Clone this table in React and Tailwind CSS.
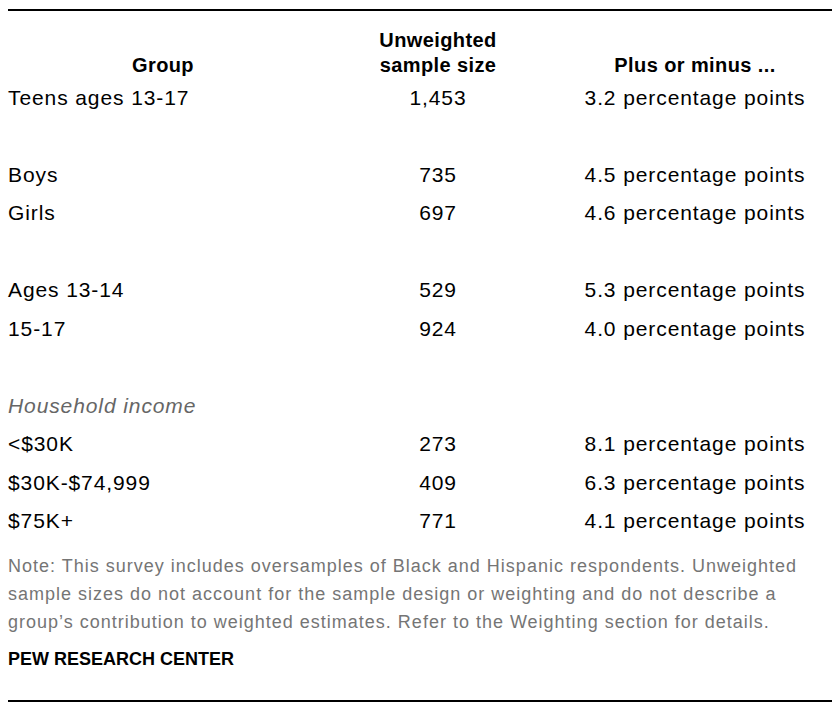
const rows = [
  { group: "Teens ages 13-17", n: "1,453", moe: "3.2 percentage points" },
  null,
  { group: "Boys", n: "735", moe: "4.5 percentage points" },
  { group: "Girls", n: "697", moe: "4.6 percentage points" },
  null,
  { group: "Ages 13-14", n: "529", moe: "5.3 percentage points" },
  { group: "15-17", n: "924", moe: "4.0 percentage points" },
  null,
  { label: "Household income" },
  { group: "<$30K", n: "273", moe: "8.1 percentage points" },
  { group: "$30K-$74,999", n: "409", moe: "6.3 percentage points" },
  { group: "$75K+", n: "771", moe: "4.1 percentage points" },
];

const App = () => {
  return (
    <div className="bg-white w-[840px] h-[710px] px-2 pt-[9px] font-['Liberation_Sans',Arial,sans-serif] text-black">
      <div className="border-t-2 border-black" />

      <div className="grid grid-cols-[310px_240px_274px] items-end pt-[17px] text-[20px] leading-[25px] font-bold tracking-[0.4px]">
        <div className="text-center">Group</div>
        <div className="text-center">
          Unweighted
          <br />
          sample size
        </div>
        <div className="text-center">Plus or minus ...</div>
      </div>

      <div className="text-[21px] tracking-[0.9px]">
        {rows.map((r, i) => {
          if (!r) return <div key={i} className="h-[38.5px]" />;
          if (r.label)
            return (
              <div key={i} className="h-[38.5px] flex items-center italic text-[#666]">
                {r.label}
              </div>
            );
          return (
            <div key={i} className="h-[38.5px] grid grid-cols-[310px_240px_274px] items-center">
              <div>{r.group}</div>
              <div className="text-center">{r.n}</div>
              <div className="text-center">{r.moe}</div>
            </div>
          );
        })}
      </div>

      <p className="mt-3 text-[18px] leading-[28px] tracking-[1px] text-[#757575] whitespace-nowrap">
        Note: This survey includes oversamples of Black and Hispanic respondents. Unweighted
        <br />
        sample sizes do not account for the sample design or weighting and do not describe a
        <br />
        group’s contribution to weighted estimates. Refer to the Weighting section for details.
      </p>

      <p className="mt-[9px] text-[18px] leading-[28px] font-bold">PEW RESEARCH CENTER</p>

      <div className="mt-[27px] border-t-2 border-black" />
    </div>
  );
};

export default App;
